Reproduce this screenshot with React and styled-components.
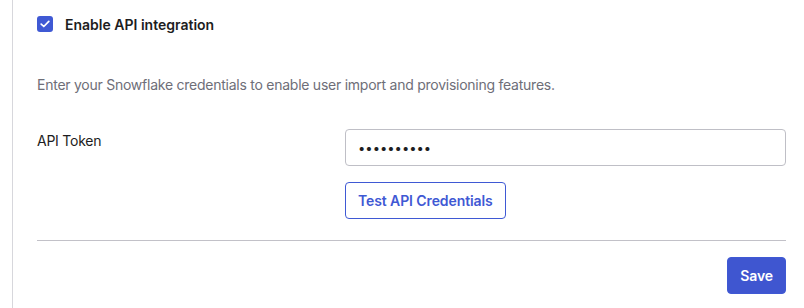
import React from "react";
import styled, { createGlobalStyle } from "styled-components";

const GlobalStyle = createGlobalStyle`
  html, body {
    margin: 0;
    padding: 0;
    background: #ffffff;
  }
  body {
    font-family: Inter, "Noto Sans", "Liberation Sans", sans-serif;
    color: #1d1d21;
    letter-spacing: -0.25px;
    -webkit-font-smoothing: antialiased;
  }
`;

const Panel = styled.div`
  margin-left: 12px;
  border-left: 1px solid #d7d7dc;
  padding: 16px 18px 14px 24px;
  min-height: 278px;
`;

const CheckRow = styled.label`
  display: flex;
  align-items: center;
  gap: 12px;
  height: 16px;
  font-size: 14px;
  font-weight: 600;
  letter-spacing: 0;
  color: #1d1d21;
`;

const Box = styled.span`
  width: 16px;
  height: 16px;
  border-radius: 3px;
  background: #3f59d4;
  display: flex;
  align-items: center;
  justify-content: center;
  flex-shrink: 0;
`;

const Description = styled.p`
  margin: 43px 0 0;
  font-size: 14px;
  line-height: 20px;
  color: #6e6e78;
`;

const FieldGrid = styled.div`
  display: grid;
  grid-template-columns: 308px 1fr;
  margin-top: 34px;
`;

const FieldLabel = styled.div`
  font-size: 14px;
  line-height: 20px;
  padding-top: 2px;
  color: #1d1d21;
`;

const FieldControls = styled.div`
  display: flex;
  flex-direction: column;
  align-items: flex-start;
  gap: 16px;
`;

const Input = styled.input`
  box-sizing: border-box;
  width: 100%;
  height: 37px;
  border: 1px solid #bfbfc6;
  border-radius: 4px;
  padding: 0 12px;
  font-family: inherit;
  font-size: 13px;
  color: #1d1d21;
  letter-spacing: 0;
  outline: none;
`;

const Button = styled.button`
  box-sizing: border-box;
  height: 37px;
  padding: 0 12px;
  border-radius: 4px;
  font-family: inherit;
  font-size: 14px;
  font-weight: 600;
  letter-spacing: -0.1px;
  cursor: pointer;
  border: 1px solid #3f59d4;
  background: ${(p) => (p.$primary ? "#3f56d0" : "#ffffff")};
  color: ${(p) => (p.$primary ? "#ffffff" : "#3f59d4")};
`;

const Divider = styled.hr`
  border: none;
  border-top: 1px solid #c2c1c8;
  margin: 21px 0 16px;
`;

const Footer = styled.div`
  display: flex;
  justify-content: flex-end;
`;

const CheckIcon = () => (
  <svg width="10" height="8" viewBox="0 0 10 8" fill="none">
    <path
      d="M1.2 4.1 L3.8 6.5 L8.8 1.4"
      stroke="#ffffff"
      strokeWidth="1.7"
      strokeLinecap="round"
      strokeLinejoin="round"
    />
  </svg>
);

export default function App() {
  return (
    <>
      <GlobalStyle />
      <Panel>
        <CheckRow>
          <Box>
            <CheckIcon />
          </Box>
          Enable API integration
        </CheckRow>
        <Description>
          Enter your Snowflake credentials to enable user import and
          provisioning features.
        </Description>
        <FieldGrid>
          <FieldLabel>API Token</FieldLabel>
          <FieldControls>
            <Input type="password" defaultValue="abcdefghij" readOnly />
            <Button>Test API Credentials</Button>
          </FieldControls>
        </FieldGrid>
        <Divider />
        <Footer>
          <Button $primary>Save</Button>
        </Footer>
      </Panel>
    </>
  );
}
